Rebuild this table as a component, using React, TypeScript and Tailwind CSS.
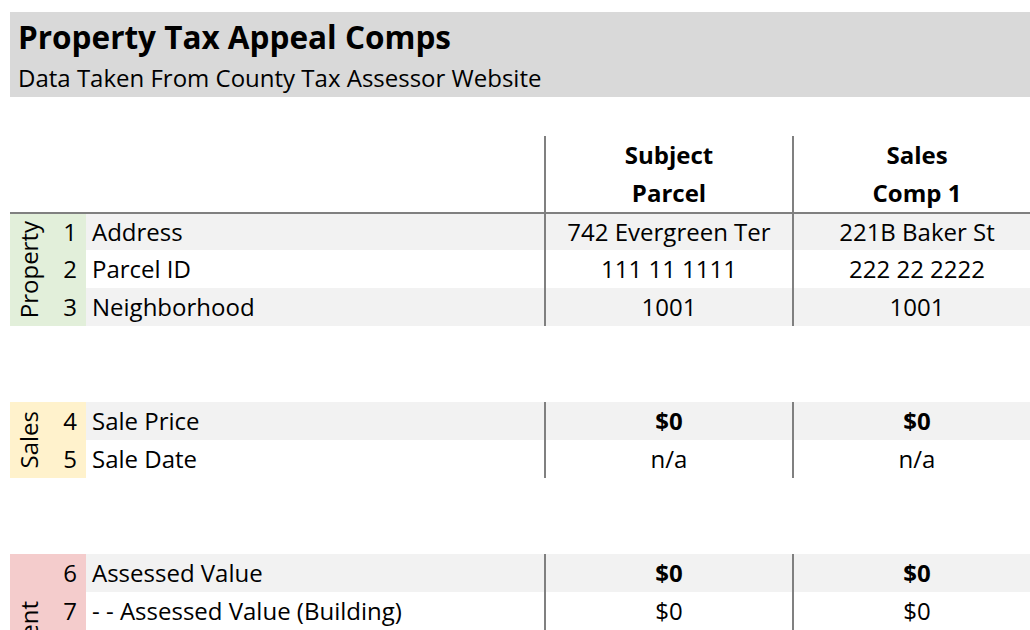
import React from "react";

type Row = { n: number; label: string; a: string; b: string; bold?: boolean };
type Section = { name: string; bg: string; rows: Row[] };

const sections: Section[] = [
  {
    name: "Property",
    bg: "bg-[#e2efda]",
    rows: [
      { n: 1, label: "Address", a: "742 Evergreen Ter", b: "221B Baker St" },
      { n: 2, label: "Parcel ID", a: "111 11 1111", b: "222 22 2222" },
      { n: 3, label: "Neighborhood", a: "1001", b: "1001" },
    ],
  },
  {
    name: "Sales",
    bg: "bg-[#fff2cc]",
    rows: [
      { n: 4, label: "Sale Price", a: "$0", b: "$0", bold: true },
      { n: 5, label: "Sale Date", a: "n/a", b: "n/a" },
    ],
  },
  {
    name: "Assessment",
    bg: "bg-[#f4cccc]",
    rows: [
      { n: 6, label: "Assessed Value", a: "$0", b: "$0", bold: true },
      { n: 7, label: "- - Assessed Value (Building)", a: "$0", b: "$0" },
      { n: 8, label: "- - Assessed Value (Land)", a: "$0", b: "$0" },
      { n: 9, label: "Assessed Value / SF", a: "$0", b: "$0" },
      { n: 10, label: "Assessed Value / Acre", a: "$0", b: "$0" },
      { n: 11, label: "Tax Year", a: "2024", b: "2024" },
    ],
  },
];

function SectionBlock({ s, first }: { s: Section; first: boolean }) {
  return (
    <div className="flex">
      <div className={`w-[38px] shrink-0 flex items-center justify-center ${s.bg}`}>
        <span className="[writing-mode:vertical-rl] rotate-180 leading-[38px] whitespace-nowrap">{s.name}</span>
      </div>
      <div className="flex-1 flex flex-col">
        {s.rows.map((r, i) => (
          <div
            key={r.n}
            className={`flex ${i === 0 && first ? "h-[36px]" : "h-[38px]"} items-center ${i % 2 === 0 ? "bg-[#f2f2f2]" : "bg-white"}`}
          >
            <div className={`w-[38px] shrink-0 h-full flex items-center justify-end pr-[9px] ${s.bg}`}>{r.n}</div>
            <div className="w-[458px] shrink-0 h-full flex items-center pl-[6px] whitespace-nowrap">{r.label}</div>
            <div className={`w-[248px] shrink-0 h-full flex items-center justify-center border-l-2 border-[#808080] ${r.bold ? "font-bold" : ""}`}>
              {r.a}
            </div>
            <div className={`w-[300px] shrink-0 h-full flex items-center border-l-2 border-[#808080] ${r.bold ? "font-bold" : ""}`}>
              <span className="w-[246px] text-center">{r.b}</span>
            </div>
          </div>
        ))}
      </div>
    </div>
  );
}

export default function App() {
  return (
    <div
      className="w-[1030px] h-[630px] overflow-hidden bg-white text-black text-[24px]"
      style={{ fontFamily: '"Open Sans", "Noto Sans", sans-serif' }}
    >
      <div className="mt-[12px] ml-[10px] h-[85px] bg-[#d9d9d9] pl-[8px] pt-[3px]">
        <div className="text-[31.5px] font-bold leading-[44px]">Property Tax Appeal Comps</div>
        <div className="text-[24px] leading-[32px] mt-[3px] whitespace-nowrap">Data Taken From County Tax Assessor Website</div>
      </div>
      <div className="ml-[10px] mt-[39px] w-[1100px]">
        <div className="flex h-[78px] border-b-2 border-[#808080] font-bold">
          <div className="w-[534px] shrink-0" />
          <div className="w-[248px] shrink-0 border-l-2 border-[#808080] flex flex-col items-center leading-[38px]">
            <span>Subject</span>
            <span>Parcel</span>
          </div>
          <div className="w-[300px] shrink-0 border-l-2 border-[#808080] flex flex-col leading-[38px]">
            <span className="w-[246px] text-center">Sales</span>
            <span className="w-[246px] text-center">Comp 1</span>
          </div>
        </div>
        <div className="flex flex-col gap-[76px]">
          {sections.map((s, i) => (
            <SectionBlock key={s.name} s={s} first={i === 0} />
          ))}
        </div>
      </div>
    </div>
  );
}
